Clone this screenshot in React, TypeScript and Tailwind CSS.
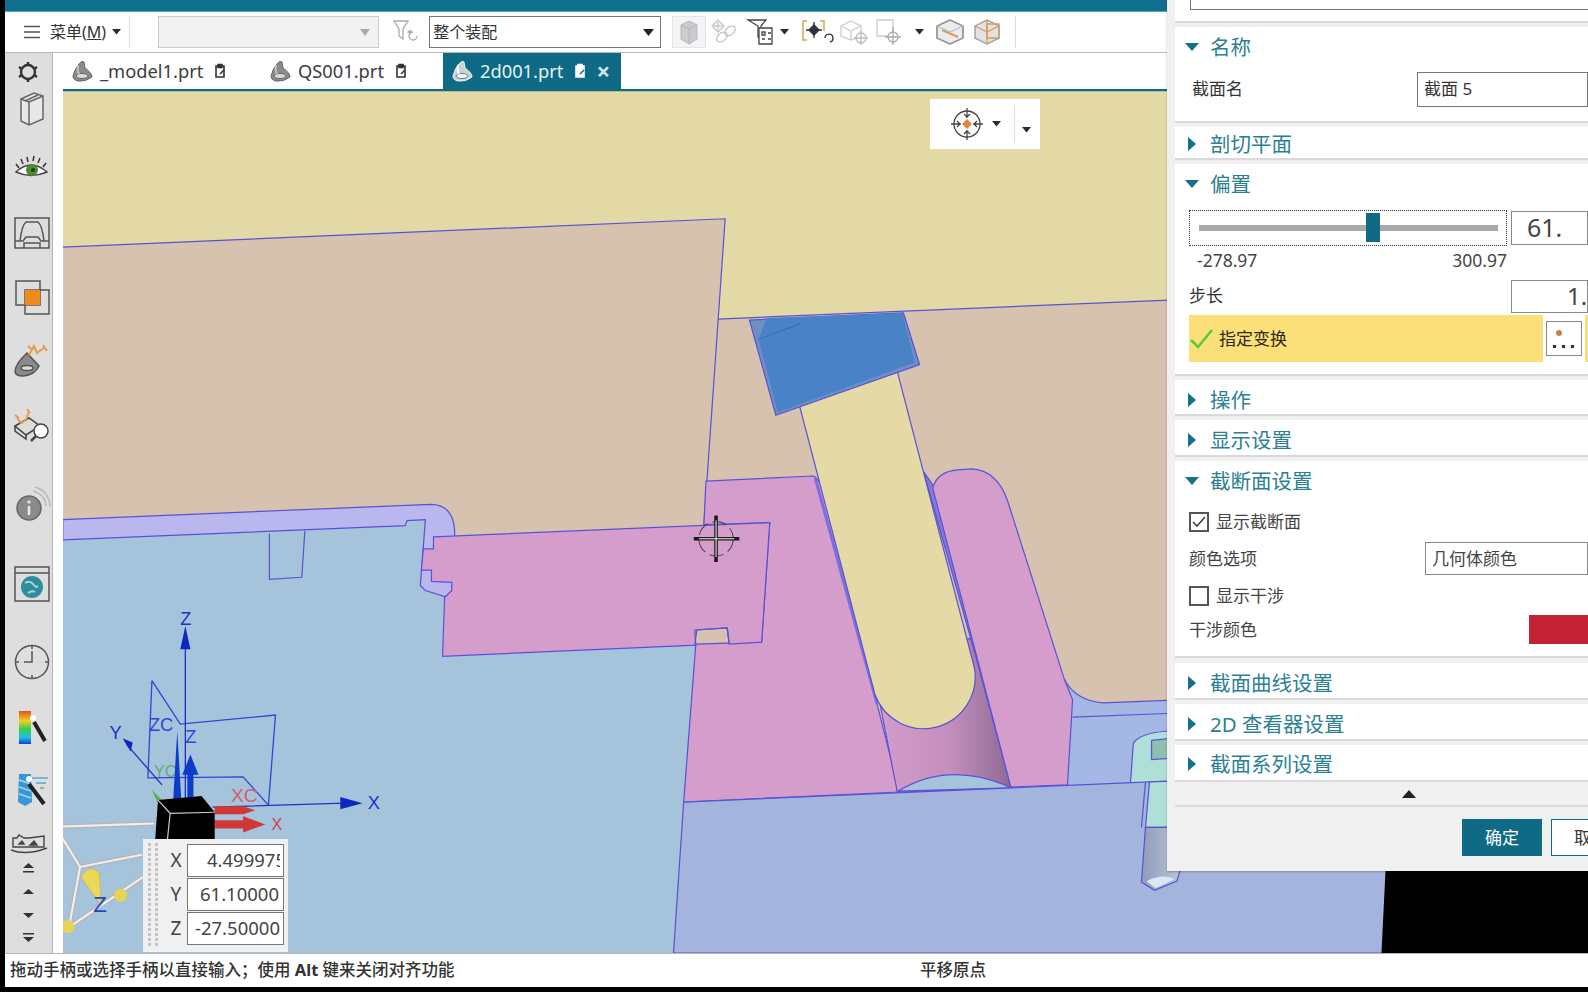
import React from 'react';

const Caret = ({ className = '' }: { className?: string }) => (
  <svg width="9" height="6" viewBox="0 0 9 6" className={className}>
    <path d="M0 0h9L4.5 5.5z" fill="#2b2b2b" />
  </svg>
);

const PartIcon = ({ light }: { light?: boolean }) => (
  <svg width="25" height="25" viewBox="0 0 25 25">
    <path d="M3 17 Q5 9 9 5 Q12 1 14 3 L15 9 Q22 14 22 18 Q16 23 8 22 Q3 21 3 17z" fill={light ? '#c9d3da' : '#8b8b8b'} stroke={light ? '#eef2f4' : '#666'} />
    <ellipse cx="12" cy="17" rx="6" ry="2.6" fill={light ? '#eef2f4' : '#d8d8d8'} stroke={light ? '#5f7f8f' : '#666'} />
    <path d="M8 6 Q7 12 9 15" stroke={light ? '#fff' : '#c4c4c4'} strokeWidth="2" fill="none" />
  </svg>
);

const FileIcon = ({ light }: { light?: boolean }) => (
  <svg width="15" height="17" viewBox="0 0 15 17" fill="none" stroke={light ? '#fff' : '#333'} strokeWidth="1.6">
    <path d="M3 3h8v11H3z" fill={light ? '#fff' : 'none'} />
    <path d="M5 1.5h4v3H5z" fill={light ? '#fff' : '#333'} />
    <path d="M7 11l4-4" stroke={light ? '#0f6a85' : '#333'} />
  </svg>
);

const Tab = ({ name, active, className = '' }: { name: string; active?: boolean; className?: string }) => (
  <div className={`flex items-center h-full pl-[7px] ${active ? 'bg-[#0f6a85] text-[#e6f2f5]' : 'text-[#3c3c3c]'} ${className}`}>
    <PartIcon light={active} />
    <span className="ml-[5px] text-[18.300px] leading-none">{name}</span>
    <span className="ml-[10px] flex"><FileIcon light={active} /></span>
    {active && <span className="ml-[8px] text-[24px] leading-none text-[#d5e6ea] font-bold">×</span>}
  </div>
);

const ToolIcon = ({ children, w = 34 }: { children: React.ReactNode; w?: number }) => (
  <svg width={w} height="30" viewBox={`0 0 ${w} 30`} fill="none" strokeWidth="1.3">{children}</svg>
);

const SideIcon = ({ children }: { children: React.ReactNode }) => (
  <svg width="38" height="38" viewBox="0 0 38 38" fill="none" strokeWidth="1.5" className="ml-[6px]">{children}</svg>
);

const SectionHead = ({ title, open }: { title: string; open?: boolean }) => (
  <div className="flex items-center h-[40px] pl-[10px]">
    <span className="w-[25px] flex">
      {open ? (
        <svg width="14" height="10" viewBox="0 0 14 10"><path d="M0 1h14L7 9z" fill="#15708a" /></svg>
      ) : (
        <svg width="14" height="14" viewBox="0 0 14 14"><path d="M3 0l8 7-8 7z" fill="#15708a" /></svg>
      )}
    </span>
    <span className="text-[20.500px] leading-none text-[#2b8094]">{title}</span>
  </div>
);

const sections = 'bg-white border-b-2 border-[#d9d9dc] overflow-hidden';

const Sidebar = () => (
  <div className="w-[48px] bg-[#dedede] border-r border-[#b5b5b5] flex flex-col items-center shrink-0">
    <div className="h-[38px] flex items-center">
      <svg width="38" height="38" viewBox="0 0 38 38" fill="none">
        <circle cx="18" cy="19" r="7" stroke="#333" strokeWidth="2.4" />
        <path d="M18 9v3M18 26v3M9 14l3 2M24 22l3 2M9 24l3-2M24 16l3-2" stroke="#333" strokeWidth="2.6" />
      </svg>
    </div>
    <div className="h-[36px] flex items-center">
      <SideIcon>
        <path d="M8 9l13-6 9 3v23l-14 6-8-4z" stroke="#666" fill="#e8e8e8" />
        <path d="M16 12l14-6M16 12v23M8 9l8 3M12 11l13-6" stroke="#666" />
      </SideIcon>
    </div>
    <div className="h-[84px] flex items-center">
      <SideIcon>
        <path d="M3 22 Q18 8 34 22 Q18 29 3 22z" fill="#fff" stroke="#444" />
        <circle cx="19" cy="20" r="6" fill="#4d8b2e" />
        <circle cx="20" cy="20" r="2" fill="#1f3a12" />
        <path d="M6 18l-3-4M10 14l-2-5M15 12l-1-5M20 11l1-5M25 13l2-5M30 17l3-4" stroke="#333" />
      </SideIcon>
    </div>
    <div className="h-[46px] flex items-center">
      <SideIcon>
        <path d="M2 3h34v30H2z" stroke="#555" />
        <path d="M7 26 Q9 10 13 7h12q4 3 6 19" stroke="#555" />
        <path d="M2 26h8l3 -4h12l3 4h8M11 33v-5h16v5" stroke="#555" />
      </SideIcon>
    </div>
    <div className="h-[80px] flex items-center">
      <SideIcon>
        <path d="M3 3h24v24H3zM12 12h24v24H12z" stroke="#555" />
        <path d="M12 12h15v15H12z" fill="#ef8a1d" />
      </SideIcon>
    </div>
    <div className="h-[48px] flex items-center">
      <SideIcon>
        <path d="M2 30 Q2 22 14 11l12 13 Q22 33 10 34 Q3 34 2 30z" fill="#8a8a8a" stroke="#555" />
        <ellipse cx="14" cy="26" rx="6" ry="2.5" fill="#ddd" stroke="#555" />
        <path d="M16 13l5-9 3 7 8-6M18 7l-3-3M30 3l4 6" stroke="#e89a4c" strokeWidth="2" />
      </SideIcon>
    </div>
    <div className="h-[78px] flex items-center">
      <SideIcon>
        <path d="M2 21l14-8 11 8-14 9z" fill="#ddd" stroke="#444" />
        <path d="M2 21v5l11 8v-4" stroke="#444" />
        <path d="M4 13l4 5 5-3 3-9M2 10l4 3M14 4l3 4" stroke="#e89a4c" strokeWidth="2" />
        <circle cx="28" cy="26" r="7" fill="#fff" stroke="#444" />
        <path d="M23 31l-5 5" stroke="#444" strokeWidth="2.5" />
      </SideIcon>
    </div>
    <div className="h-[84px] flex items-center">
      <SideIcon>
        <circle cx="16" cy="22" r="12" fill="#8a8a8a" stroke="#666" />
        <path d="M16 20v9" stroke="#e8e8e8" strokeWidth="2.5" />
        <circle cx="16" cy="16" r="1.6" fill="#e8e8e8" />
        <path d="M20 5 Q32 8 33 20M22 1 Q36 5 37 21" stroke="#bbb" />
      </SideIcon>
    </div>
    <div className="h-[74px] flex items-center">
      <SideIcon>
        <path d="M2 2h34v34H2zM2 8h34" stroke="#555" />
        <circle cx="19" cy="22" r="11" fill="#2e8f9c" />
        <path d="M12 18q5-3 8 1t5 2M15 28q4-3 7-1" stroke="#a9d6dc" strokeWidth="2" />
      </SideIcon>
    </div>
    <div className="h-[82px] flex items-center">
      <SideIcon>
        <circle cx="19" cy="19" r="16.500" stroke="#555" />
        <path d="M19 8v11h-8M19 2v4M19 32v4M2 19h4M32 19h4" stroke="#555" />
      </SideIcon>
    </div>
    <div className="h-[48px] flex items-center">
      <svg width="38" height="38" viewBox="0 0 38 38" fill="none" className="ml-[4px]">
        <defs>
          <linearGradient id="rainbow" x1="0" y1="0" x2="0" y2="1">
            <stop offset="0" stopColor="#e8501c" />
            <stop offset="0.3" stopColor="#f0d020" />
            <stop offset="0.55" stopColor="#30d050" />
            <stop offset="0.8" stopColor="#20c0e0" />
            <stop offset="1" stopColor="#1040e0" />
          </linearGradient>
        </defs>
        <path d="M7 3h12v33H7z" fill="url(#rainbow)" />
        <path d="M22 14l11 19" stroke="#222" strokeWidth="4" />
        <circle cx="21" cy="10" r="3" fill="#fff" />
      </svg>
    </div>
    <div className="h-[78px] flex items-center">
      <svg width="38" height="38" viewBox="0 0 38 38" fill="none" className="ml-[4px]">
        <path d="M7 3h12l1 28-7 4-7-4z" fill="#3a96d6" />
        <path d="M7 9l12 4M7 16l12 4M7 23l12 4" stroke="#a8d8f0" strokeWidth="1.4" />
        <path d="M20 7h16M24 12h10M28 17h4" stroke="#5aa8d8" strokeWidth="1.6" />
        <path d="M17 13l15 20" stroke="#222" strokeWidth="4" />
        <circle cx="17" cy="8" r="3" fill="#fff" />
      </svg>
    </div>
    <div className="h-[28px] flex items-center">
      <svg width="38" height="22" viewBox="0 0 38 22" fill="none" stroke="#444" strokeWidth="1.4">
        <path d="M1 18q15 6 36-2M3 15V6h4l2-3 5 3h5v0l15-2v11H3z" />
        <path d="M9 12l3-3 2 3zM20 13l4-4 3 4z" fill="#444" />
      </svg>
    </div>
    <div className="h-[22px] flex items-center">
      <svg width="11" height="11" viewBox="0 0 11 11"><path d="M0 5l5.500-5 5.500 5zM0 8h11v1.600H0z" fill="#333" /></svg>
    </div>
    <div className="h-[24px] flex items-center">
      <svg width="11" height="7" viewBox="0 0 11 7"><path d="M0 6l5.500-5 5.500 5z" fill="#333" /></svg>
    </div>
    <div className="h-[24px] flex items-center">
      <svg width="11" height="7" viewBox="0 0 11 7"><path d="M0 1l5.500 5 5.500-5z" fill="#333" /></svg>
    </div>
    <div className="h-[22px] flex items-center">
      <svg width="11" height="11" viewBox="0 0 11 11"><path d="M0 0h11v1.600H0zM0 4l5.500 5 5.500-5z" fill="#333" /></svg>
    </div>
  </div>
);

const outline = { stroke: '#5a52d6', strokeWidth: 1.2 };
const label = { fontFamily: 'Liberation Sans' };

const Scene = () => (
  <svg className="absolute inset-0" width="1525" height="862" viewBox="0 0 1525 862">
    <defs>
      <linearGradient id="bore" x1="0" y1="0" x2="1" y2="0">
        <stop offset="0" stopColor="#d49dcc" />
        <stop offset="0.55" stopColor="#c48fbe" />
        <stop offset="1" stopColor="#8a6a92" />
      </linearGradient>
      <linearGradient id="pin" x1="0" y1="0" x2="1" y2="0">
        <stop offset="0" stopColor="#8e9cb8" />
        <stop offset="1" stopColor="#b8c4d8" />
      </linearGradient>
    </defs>
    <g transform="translate(-63 -91) scale(1.0128)">
      <rect x="62" y="90" width="1520" height="860" fill="#e3d9a6" />
      {/* tan plates */}
      <path d="M62 244L716 216L709 315L1160 296V720H700L62 560z" fill="#d6c2ae" />
      <path d="M62 244L716 216L695 518" fill="none" {...outline} />

      {/* blue body and lavender shell */}
      <path d="M62 533L420 513L415 578L439 590L437 648L688 636L675 792L665 941H62z" fill="#a6c3dc" />
      <path d="M62 513L425 498Q449 498 449 528V585L439 589L420 583L415 578L420 513L402 514L400 519L62 533z" fill="#b9b7ee" {...outline} />
      <path d="M266 527V572L298 570L301 524" fill="#a6c3dc" {...outline} />

      {/* lower right */}
      <path d="M1051 671Q1062 692 1089 694L1165 691V780H1050z" fill="#a5b8e5" {...outline} />
      <path d="M1059 708L1165 704" fill="none" {...outline} />
      <path d="M1116 775L1119 734Q1125 724 1151 722H1165V780z" fill="#aee0d8" {...outline} />
      <path d="M1137 731L1165 728V748L1137 750z" fill="#8fbfb0" {...outline} />

      {/* pink */}
      <path d="M697 475L803 470Q808 472 812 482L888 782L675 792L687 636L752 634L760 516L695 518z" fill="#d49dcc" {...outline} />
      <path d="M428 530L760 516L752 634L720 636L718 620L686 622L687 637L437 648L439 590L446 583V575L426 574V563L416 563L418 542L428 542z" fill="#d49dcc" {...outline} />
      <path d="M686 637L688 622L718 620L720 636" fill="none" {...outline} />

      {/* bore under the rod */}
      <path d="M860 650L960 630L1000 778L886 782z" fill="url(#bore)" {...outline} />
      <path d="M887 781Q935 752 992 775L998 778z" fill="#a6c3dc" {...outline} />

      {/* right pink wall */}
      <path d="M912 466L922 480L998 777L964 650z" fill="#8a78d8" {...outline} />
      <path d="M921 482Q925 466 945 464L960 463Q985 465 995 495L1051 671L1059 691L1054 775L998 777z" fill="#d49dcc" {...outline} />
      <path d="M805 472L866 695" stroke="#7c6edc" strokeWidth="3" fill="none" />

      {/* rod */}
      <path d="M789 399L886 367L962 659A51 51 0 0 1 864 686z" fill="#e5daa5" {...outline} />

      {/* socket head */}
      <path d="M740 316L892 309L908 360L766 410z" fill="#6f8fc2" {...outline} />
      <path d="M749 335L757 314L891 309L903 358L768 407z" fill="#4a82c7" />
      <path d="M749 335L790 320" stroke="#3468c8" strokeWidth="1" fill="none" />
      <path d="M709 315L1160 296" fill="none" {...outline} />

      {/* base plate */}
      <path d="M675 792L1135 772L1400 762V941H665z" fill="#a3b5dc" {...outline} />
      <path d="M1135 772L1165 771V817H1131z" fill="#aee0d8" {...outline} />
      <path d="M1131 772L1127 817" fill="none" {...outline} />
      <path d="M1131 817H1165V860L1162 870L1140 879L1127 871z" fill="url(#pin)" {...outline} />
      <path d="M1132 870Q1148 862 1160 868L1141 877z" fill="#dce8f5" />
      <path d="M1368 860H1568V941H1364z" fill="#000" />

      {/* yellow handles */}
      <path d="M62 816L152 813M62 828L79 856L140 844M79 856L69 911M69 915L141 866" stroke="#b4b8be" strokeWidth="5" fill="none" />
      <path d="M62 816L152 813M62 828L79 856L140 844M79 856L69 911M69 915L141 866" stroke="#eef0f2" strokeWidth="2" fill="none" />
      <path d="M80 866Q88 852 98 862L100 894z" fill="#ead85a" stroke="#c8b440" strokeWidth="0.6" />
      <circle cx="119" cy="884" r="6.500" fill="#e8d352" />
      <circle cx="67" cy="915" r="6.500" fill="#e8d352" />
      <text x="92" y="900" fontSize="22" fill="#2048c8" {...label}>Z</text>

      {/* csys planes */}
      <path d="M150 672L178 715L272 706L265 795M150 672L146 768L240 767L265 795" fill="none" stroke="#2c48d8" strokeWidth="1.3" />
      <path d="M183 635V790M125 735L160 775M210 797L340 793" stroke="#2030c8" strokeWidth="1.3" fill="none" />
      <path d="M183 618L188 641H178z" fill="#0c28c0" />
      <path d="M121 729L131 733L129 742z" fill="#0c28c0" />
      <path d="M358 793L336 787V799z" fill="#0c28c0" />
      <text x="178" y="617" fontSize="18" fill="#2030c8" {...label}>Z</text>
      <text x="108" y="730" fontSize="18" fill="#2030c8" {...label}>Y</text>
      <text x="363" y="799" fontSize="18" fill="#2030c8" {...label}>X</text>
      <text x="147" y="722" fontSize="18" fill="#2c48d8" {...label}>ZC</text>
      <text x="183" y="734" fontSize="18" fill="#2c48d8" {...label}>Z</text>
      <text x="152" y="767" fontSize="16" fill="#5cae78" {...label}>YC</text>
      <text x="228" y="792" fontSize="19" fill="#d0606c" {...label}>XC</text>
      <text x="268" y="820" fontSize="16" fill="#d0404c" {...label}>X</text>
      <path d="M171 790L175 722L179 790z" fill="#0c3cc8" />
      <path d="M185 800V765H180L188 745L196 765H191V800z" fill="#0c3cc8" />
      <path d="M150 780L165 795L158 798z" fill="#48b848" />
      <path d="M212 796H240L252 800L240 804H212z" fill="#d03838" />
      <path d="M212 810H240V806L262 814L240 822V818H212z" fill="#d03838" />

      {/* handle cube */}
      <path d="M156 790L199 786L212 802V832H153z" fill="#000" />
      <path d="M156 790L168 803L212 802M168 803L165 832" stroke="#c8c8c8" strokeWidth="1.200" fill="none" />

      {/* cursor */}
      <circle cx="707" cy="532" r="17" fill="none" stroke="#444" strokeDasharray="14 5" />
      <path d="M685 532H730M707 509V555" stroke="#1a1a1a" strokeWidth="3.500" />
      <path d="M690 532H725M707 514V550" stroke="#f4eef4" strokeWidth="1" />
    </g>
  </svg>
);

const CoordRow = ({ axis, value, pad }: { axis: string; value: string; pad: string }) => (
  <div className="flex items-center h-[34px]">
    <span className="w-[16px] text-[19px] text-[#444] text-center">{axis}</span>
    <div className="ml-[3px] w-[97px] h-[33px] bg-white border border-[#777] flex items-center">
      <div className={`w-[92px] overflow-hidden ${pad}`}>
        <span className="text-[18.500px] text-[#444] whitespace-nowrap">{value}</span>
      </div>
    </div>
  </div>
);

const Panel = () => (
  <div className="absolute left-[1167px] top-0 w-[421px] h-[871px] bg-[#f0f0f1] pl-2 overflow-hidden flex flex-col shadow-[0_1px_2px_rgba(0,0,0,0.25)]">
    <div className={`${sections} h-[23px] shrink-0 pl-[15px]`}>
      <div className="h-[10px] border-b border-l border-[#777]" />
    </div>
    <div className={`${sections} h-[96px] mt-[4px] shrink-0`}>
      <SectionHead title="名称" open />
      <div className="flex items-center h-[36px] pl-[17px] mt-[4px]">
        <span className="w-[225px] text-[17px] text-[#333]">截面名</span>
        <div className="flex-1 h-[35px] border border-[#777] flex items-center pl-[6px] text-[17px] text-[#333]">截面 5</div>
      </div>
    </div>
    <div className={`${sections} h-[33px] mt-[4px] shrink-0 -mb-px`}>
      <div className="-mt-[3px]"><SectionHead title="剖切平面" /></div>
    </div>
    <div className={`${sections} h-[212px] mt-[5px] shrink-0`}>
      <SectionHead title="偏置" open />
      <div className="flex items-center pl-[14px] mt-[6px]">
        <div className="relative w-[318px] h-[36px] border border-dotted border-[#333] flex items-center justify-center">
          <div className="w-[299px] h-[6px] bg-[#a9a9ab]" />
          <div className="absolute left-[176px] top-[2px] w-[14px] h-[29px] bg-[#0f6a85]" />
        </div>
        <div className="ml-[4px] flex-1 h-[34px] border border-[#888] flex items-center pl-[15px] text-[25px] text-[#444]">61.</div>
      </div>
      <div className="flex justify-between w-[318px] ml-[14px] pl-[8px] mt-[1px] h-[26px] items-center text-[17.500px] text-[#444]">
        <span>-278.97</span>
        <span>300.97</span>
      </div>
      <div className="flex items-center pl-[14px] mt-[6px] h-[34px]">
        <span className="w-[322px] shrink-0 text-[17px] text-[#333]">步长</span>
        <div className="flex-1 min-w-0 h-[33px] border border-[#888] flex items-center pl-[55px] text-[24px] text-[#444]">1.</div>
      </div>
      <div className="flex items-stretch pl-[14px] mt-[2px] h-[47px]">
        <div className="w-[354px] shrink-0 bg-[#fbdf78] flex items-center">
          <svg width="24" height="22" viewBox="0 0 24 22" className="ml-px"><path d="M1 12l7 7L22 2" fill="none" stroke="#58c83c" strokeWidth="2.500" /></svg>
          <span className="ml-[5px] text-[17px] text-[#2e2a18]">指定变换</span>
        </div>
        <div className="ml-[3px] mt-[6px] w-[36px] h-[35px] shrink-0 border border-[#888] bg-white relative">
          <div className="absolute left-[9px] top-[8px] w-[6px] h-[6px] rounded-full bg-[#c98048]" />
          <div className="absolute left-[6px] bottom-[7px] flex gap-[6px]">
            <i className="w-[3px] h-[3px] bg-[#333]" /><i className="w-[3px] h-[3px] bg-[#333]" /><i className="w-[3px] h-[3px] bg-[#333]" />
          </div>
        </div>
        <div className="ml-[3px] w-[20px] shrink-0 bg-[#fbdf78]" />
      </div>
    </div>
    <div className={`${sections} h-[36px] mt-[4px] shrink-0`}><SectionHead title="操作" /></div>
    <div className={`${sections} h-[37px] mt-[4px] shrink-0`}><SectionHead title="显示设置" /></div>
    <div className={`${sections} h-[197px] mt-[4px] shrink-0`}>
      <SectionHead title="截断面设置" open />
      <div className="flex items-center pl-[14px] h-[37px] mt-[2px]">
        <div className="w-[20px] h-[20px] border-2 border-[#555] flex items-center justify-center">
          <svg width="14" height="12" viewBox="0 0 14 12"><path d="M1 6l4 4 8-9" fill="none" stroke="#444" strokeWidth="1.600" /></svg>
        </div>
        <span className="ml-[7px] text-[17px] text-[#444]">显示截断面</span>
      </div>
      <div className="flex items-center pl-[14px] h-[37px]">
        <span className="w-[236px] text-[17px] text-[#444]">颜色选项</span>
        <div className="flex-1 h-[33px] border border-[#888] flex items-center pl-[6px] text-[17px] text-[#444]">几何体颜色</div>
      </div>
      <div className="flex items-center pl-[14px] h-[37px]">
        <div className="w-[20px] h-[20px] border-2 border-[#555]" />
        <span className="ml-[7px] text-[17px] text-[#444]">显示干涉</span>
      </div>
      <div className="flex items-center pl-[14px] h-[31px]">
        <span className="w-[340px] text-[17px] text-[#444]">干涉颜色</span>
        <div className="flex-1 h-[29px] bg-[#c32334]" />
      </div>
    </div>
    <div className={`${sections} h-[37px] mt-[5px] shrink-0`}><SectionHead title="截面曲线设置" /></div>
    <div className={`${sections} h-[37px] mt-[4px] shrink-0`}><SectionHead title="2D 查看器设置" /></div>
    <div className={`${sections} h-[37px] mt-[4px] shrink-0`}><div className="-mt-[1px]"><SectionHead title="截面系列设置" /></div></div>
    <div className="h-[25px] border-b-2 border-[#dcdcdf] flex items-center shrink-0 pl-[227px]">
      <svg width="14" height="8" viewBox="0 0 14 8"><path d="M7 0l7 8H0z" fill="#222" /></svg>
    </div>
    <div className="flex pl-[287px] pt-[12px] gap-[9px]">
      <div className="w-[80px] h-[37px] bg-[#0f6a85] text-white text-[17px] flex items-center justify-center shrink-0">确定</div>
      <div className="w-[80px] h-[37px] bg-white border border-[#0f6a85] text-[#333] text-[17px] flex items-center justify-center shrink-0">取消</div>
    </div>
  </div>
);

export default function App() {
  return (
    <div className="relative w-[1588px] h-[992px] overflow-hidden bg-black font-['Noto_Sans','Noto_Sans_CJK_SC',sans-serif] pl-[5px]">
      <div className="h-[12px] bg-[#0f6f8c] border-b border-[#4fa8b8]" />
      <div className="h-[41px] bg-white border-b border-[#b8b8b8] flex items-center">
        <svg width="16" height="14" viewBox="0 0 16 14" className="ml-[19px]"><path d="M0 1.500h16M0 7h16M0 12.500h16" stroke="#555" strokeWidth="1.300" /></svg>
        <span className="ml-[10px] text-[16px] text-[#333] whitespace-nowrap">菜单(<span className="underline">M</span>)</span>
        <Caret className="ml-[6px]" />
        <div className="ml-[8px] w-px h-[32px] bg-[#ddd]" />
        <div className="ml-[28px] w-[221px] h-[32px] bg-[#f2f2f3] border border-[#c9c9c9] flex items-center justify-end pr-[8px]">
          <svg width="10" height="7" viewBox="0 0 10 7"><path d="M0 0h10L5 7z" fill="#aaa" /></svg>
        </div>
        <div className="ml-[12px]">
          <ToolIcon w={30}>
            <path d="M3 4h14l-5 8v10l-4-3v-7z" stroke="#aaa" />
            <path d="M26 19a4 4 0 1 1-4-4h-4m2-2l-3 2 3 2" stroke="#aaa" />
          </ToolIcon>
        </div>
        <div className="ml-[8px] w-[232px] h-[32px] bg-white border border-[#777] flex items-center justify-between pl-[3px] pr-[6px]">
          <span className="text-[16px] text-[#333]">整个装配</span>
          <svg width="11" height="7" viewBox="0 0 11 7"><path d="M0 0h11L5.500 7z" fill="#222" /></svg>
        </div>
        <div className="ml-[11px] w-[34px] h-[32px] bg-[#f4f4f5] border border-[#e4e4e4] flex items-center justify-center">
          <svg width="22" height="28" viewBox="0 0 22 28" fill="#c9ccd0" stroke="#b4b8bc"><path d="M3 7l8-4 8 4v14l-8 5-8-5z" /><path d="M3 7l8 4 8-4M11 11v15" fill="none" /></svg>
        </div>
        <div className="ml-[1px]"><ToolIcon>
          <path d="M11 3l6 6-6 6-6-6zM11 5v8M7 9h8" stroke="#c4c4c4" />
          <ellipse cx="15" cy="20" rx="6" ry="4" transform="rotate(-40 15 20)" stroke="#c4c4c4" />
          <ellipse cx="23" cy="14" rx="6" ry="4" transform="rotate(-40 23 14)" stroke="#c4c4c4" />
        </ToolIcon></div>
        <div className="ml-[4px]"><ToolIcon>
          <path d="M3 3h18l-5 6v13l-3-2V9z" stroke="#444" />
          <path d="M14 11h13v16H14z" fill="#fff" stroke="#444" />
          <path d="M17 15h3v3h-3zM23 16h3M17 22h3M23 22h3" stroke="#444" />
        </ToolIcon></div>
        <Caret className="ml-[1px]" />
        <div className="ml-[11px]"><ToolIcon>
          <path d="M7 4H3v19h4M20 4h4v10" stroke="#d8a64c" strokeWidth="1.500" />
          <path d="M14 7l6 6-6 6-6-6z" fill="#333" />
          <path d="M14 5v16M6 13h16" stroke="#333" />
          <path d="M30 25a4 4 0 1 0-5-4" stroke="#333" />
        </ToolIcon></div>
        <div className="ml-[4px]"><ToolIcon>
          <path d="M3 9l10-5 10 5v10l-10 4-10-4zM3 9l10 5 10-5M13 14v9" stroke="#ccc" />
          <circle cx="23" cy="21" r="5" fill="#fff" stroke="#bbb" />
          <path d="M23 14v14M16 21h14" stroke="#bbb" />
        </ToolIcon></div>
        <div className="ml-[1px]"><ToolIcon>
          <path d="M4 3h16v16H4z" stroke="#ccc" />
          <circle cx="20" cy="20" r="5" fill="#fff" stroke="#aaa" />
          <path d="M20 10v18M12 20h16" stroke="#aaa" />
        </ToolIcon></div>
        <Caret className="ml-[8px]" />
        <div className="ml-[10px]"><ToolIcon>
          <path d="M3 9l13-6 13 6v12l-13 6-13-6z" fill="#ececec" stroke="#999" strokeWidth="1.800" />
          <path d="M8 13l16 7" stroke="#d99a5e" strokeWidth="2" />
          <path d="M3 9l13 6 13-6" stroke="#bbb" />
        </ToolIcon></div>
        <div className="ml-[4px]"><ToolIcon w={30}>
          <path d="M3 9l12-6 12 6v12l-12 6-12-6z" fill="#e2e2e2" stroke="#999" />
          <path d="M15 3v24M3 9l12 6 12-6" stroke="#d99a5e" />
          <path d="M15 7h12v14H15z" stroke="#d99a5e" />
        </ToolIcon></div>
        <div className="ml-[13px] w-px h-[32px] bg-[#ddd]" />
      </div>
      <div className="flex h-[900px]">
        <Sidebar />
        <div className="w-[10px] bg-white shrink-0" />
        <div className="flex-1 flex flex-col min-w-0">
          <div className="h-[36px] bg-white flex items-center shrink-0">
            <Tab name="_model1.prt" className="w-[198px]" />
            <Tab name="QS001.prt" className="w-[182px]" />
            <Tab name="2d001.prt" active className="w-[178px]" />
          </div>
          <div className="h-[2px] bg-[#0f6a85] shrink-0" />
          <div className="relative flex-1">
            <Scene />
            <div className="absolute left-[867px] top-[8px] w-[110px] h-[50px] bg-white flex items-center pl-[20px]">
              <svg width="34" height="34" viewBox="0 0 34 34" fill="none" stroke="#444" strokeWidth="1.300">
                <circle cx="17" cy="17" r="13" />
                <path d="M17 1v10M17 23v10M1 17h10M23 17h10M14 7l3 3 3-3M14 27l3-3 3 3M7 14l3 3-3 3M27 14l-3 3 3 3" />
                <path d="M17 12l5 5-5 5-5-5z" fill="#e0863a" stroke="none" />
              </svg>
              <Caret className="ml-[8px]" />
              <div className="ml-[13px] w-px h-[38px] bg-[#ddd]" />
              <Caret className="ml-[7px] mt-[11px]" />
            </div>
            <div className="absolute left-[80px] top-[748px] w-[145px] h-[113px] bg-[#f0f0f1] flex pl-[5px] pt-[4px]">
              <div className="w-[11px] h-[104px] grid grid-cols-2 auto-rows-[5px] gap-x-[3px] overflow-hidden">
                {Array.from({ length: 42 }).map((_, i) => (
                  <i key={i} className="w-[3px] h-[3px] bg-[#c4c4c4]" />
                ))}
              </div>
              <div className="ml-[9px] flex flex-col">
                <CoordRow axis="X" value="4.499975" pad="pl-[19px]" />
                <CoordRow axis="Y" value="61.10000" pad="pl-[12px]" />
                <CoordRow axis="Z" value="-27.50000" pad="pl-[7px]" />
              </div>
            </div>
          </div>
        </div>
      </div>
      <div className="h-[34px] bg-white border-t border-[#b8b8b8] flex items-center">
        <span className="ml-[5px] text-[16.500px] font-medium text-[#333] whitespace-nowrap">拖动手柄或选择手柄以直接输入；使用 <b>Alt</b> 键来关闭对齐功能</span>
        <span className="absolute left-[920px] text-[16.500px] font-medium text-[#333]">平移原点</span>
      </div>
      <Panel />
    </div>
  );
}
